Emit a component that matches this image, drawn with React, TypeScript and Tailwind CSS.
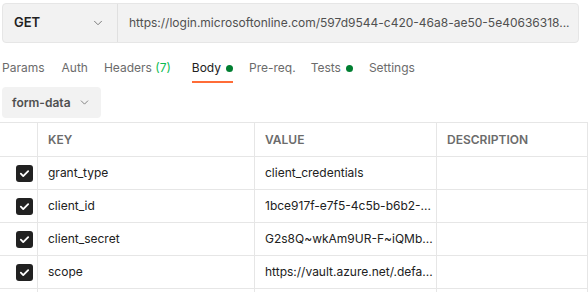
import { ChevronDown } from "lucide-react";

type Row = { key: string; value: string };

const rows: Row[] = [
  { key: "grant_type", value: "client_credentials" },
  { key: "client_id", value: "1bce917f-e7f5-4c5b-b6b2-..." },
  { key: "client_secret", value: "G2s8Q~wkAm9UR-F~iQMb..." },
  { key: "scope", value: "https://vault.azure.net/.defa..." },
];

function Check() {
  return (
    <div className="w-[17px] h-[17px] rounded-[3px] bg-[#212121] flex items-center justify-center">
      <svg width="11" height="11" viewBox="0 0 12 12" fill="none">
        <path d="M2 6.2l2.6 2.6L10 3.4" stroke="white" strokeWidth="2" strokeLinecap="round" strokeLinejoin="round" />
      </svg>
    </div>
  );
}

export default function App() {
  return (
    <div className="w-[588px] h-[292px] overflow-hidden bg-white text-[12px] text-[#212121]" style={{ fontFamily: "Inter, 'Noto Sans', sans-serif" }}>
      {/* request bar */}
      <div className="flex h-[40px] mt-[3px] ml-[2px] w-[577px] border border-[#e6e6e6] rounded-[4px] bg-[#f2f2f2]">
        <div className="w-[115px] flex items-center justify-between pl-[11px] pr-[12px] border-r border-[#e0e0e0]">
          <span className="font-semibold text-[13px] text-[#212121]">GET</span>
          <ChevronDown size={14} strokeWidth={1.5} className="text-[#6b6b6b]" />
        </div>
        <div className="flex-1 flex items-center pl-[11px] pr-[12px] min-w-0 text-[12px] text-[#505050] whitespace-nowrap">
          https://login.microsoftonline.com/597d9544-c420-46a8-ae50-5e40636318...
        </div>
      </div>

      {/* tabs */}
      <div className="flex items-end h-[40px] ml-[2px] text-[12px] leading-[16px] text-[#6b6b6b]">
        <div className="pb-[5px] border-b-2 border-transparent">Params</div>
        <div className="pb-[5px] border-b-2 border-transparent ml-[17px]">Auth</div>
        <div className="pb-[5px] border-b-2 border-transparent ml-[16px]">
          Headers <span className="text-[#0cbb52]">(7)</span>
        </div>
        <div className="pb-[5px] border-b-2 border-[#ff6c37] text-[#212121] flex items-center gap-[5px] ml-[21px]">
          Body <span className="inline-block w-[7px] h-[7px] rounded-full bg-[#007f31]" />
        </div>
        <div className="pb-[5px] border-b-2 border-transparent ml-[16px]">Pre-req.</div>
        <div className="pb-[5px] border-b-2 border-transparent flex items-center gap-[5px] ml-[15px]">
          Tests <span className="inline-block w-[7px] h-[7px] rounded-full bg-[#007f31]" />
        </div>
        <div className="pb-[5px] border-b-2 border-transparent ml-[16px]">Settings</div>
      </div>

      {/* body type */}
      <div className="mt-[4px] ml-[2px] w-[99px] h-[31px] rounded-[4px] bg-[#f2f2f2] flex items-center justify-between pl-[10px] pr-[10px] text-[12px] font-semibold text-[#505050]">
        <span>form-data</span>
        <ChevronDown size={13} strokeWidth={1.5} className="text-[#6b6b6b]" />
      </div>

      {/* table */}
      <div className="mt-[4px] w-[588px] border-t border-r border-[#e6e6e6]">
        <div className="grid grid-cols-[38px_217px_182px_150px] h-[34px] border-b border-[#e6e6e6] text-[12px] font-semibold text-[#6b6b6b]">
          <div className="border-r border-[#e6e6e6]" />
          <div className="border-r border-[#e6e6e6] flex items-center pl-[10px]">KEY</div>
          <div className="border-r border-[#e6e6e6] flex items-center pl-[10px]">VALUE</div>
          <div className="flex items-center pl-[10px]">DESCRIPTION</div>
        </div>
        {rows.map((r) => (
          <div key={r.key} className="grid grid-cols-[38px_217px_182px_150px] h-[33px] border-b border-[#e6e6e6] text-[12px]">
            <div className="border-r border-[#e6e6e6] flex items-center pl-[16px]">
              <Check />
            </div>
            <div className="border-r border-[#e6e6e6] flex items-center pl-[10px] text-[#212121]">{r.key}</div>
            <div className="border-r border-[#e6e6e6] flex items-center pl-[10px] whitespace-nowrap">{r.value}</div>
            <div />
          </div>
        ))}
        <div className="grid grid-cols-[38px_217px_182px_150px] h-[33px]">
          <div className="border-r border-[#e6e6e6]" />
          <div className="border-r border-[#e6e6e6]" />
          <div className="border-r border-[#e6e6e6]" />
          <div />
        </div>
      </div>
    </div>
  );
}
